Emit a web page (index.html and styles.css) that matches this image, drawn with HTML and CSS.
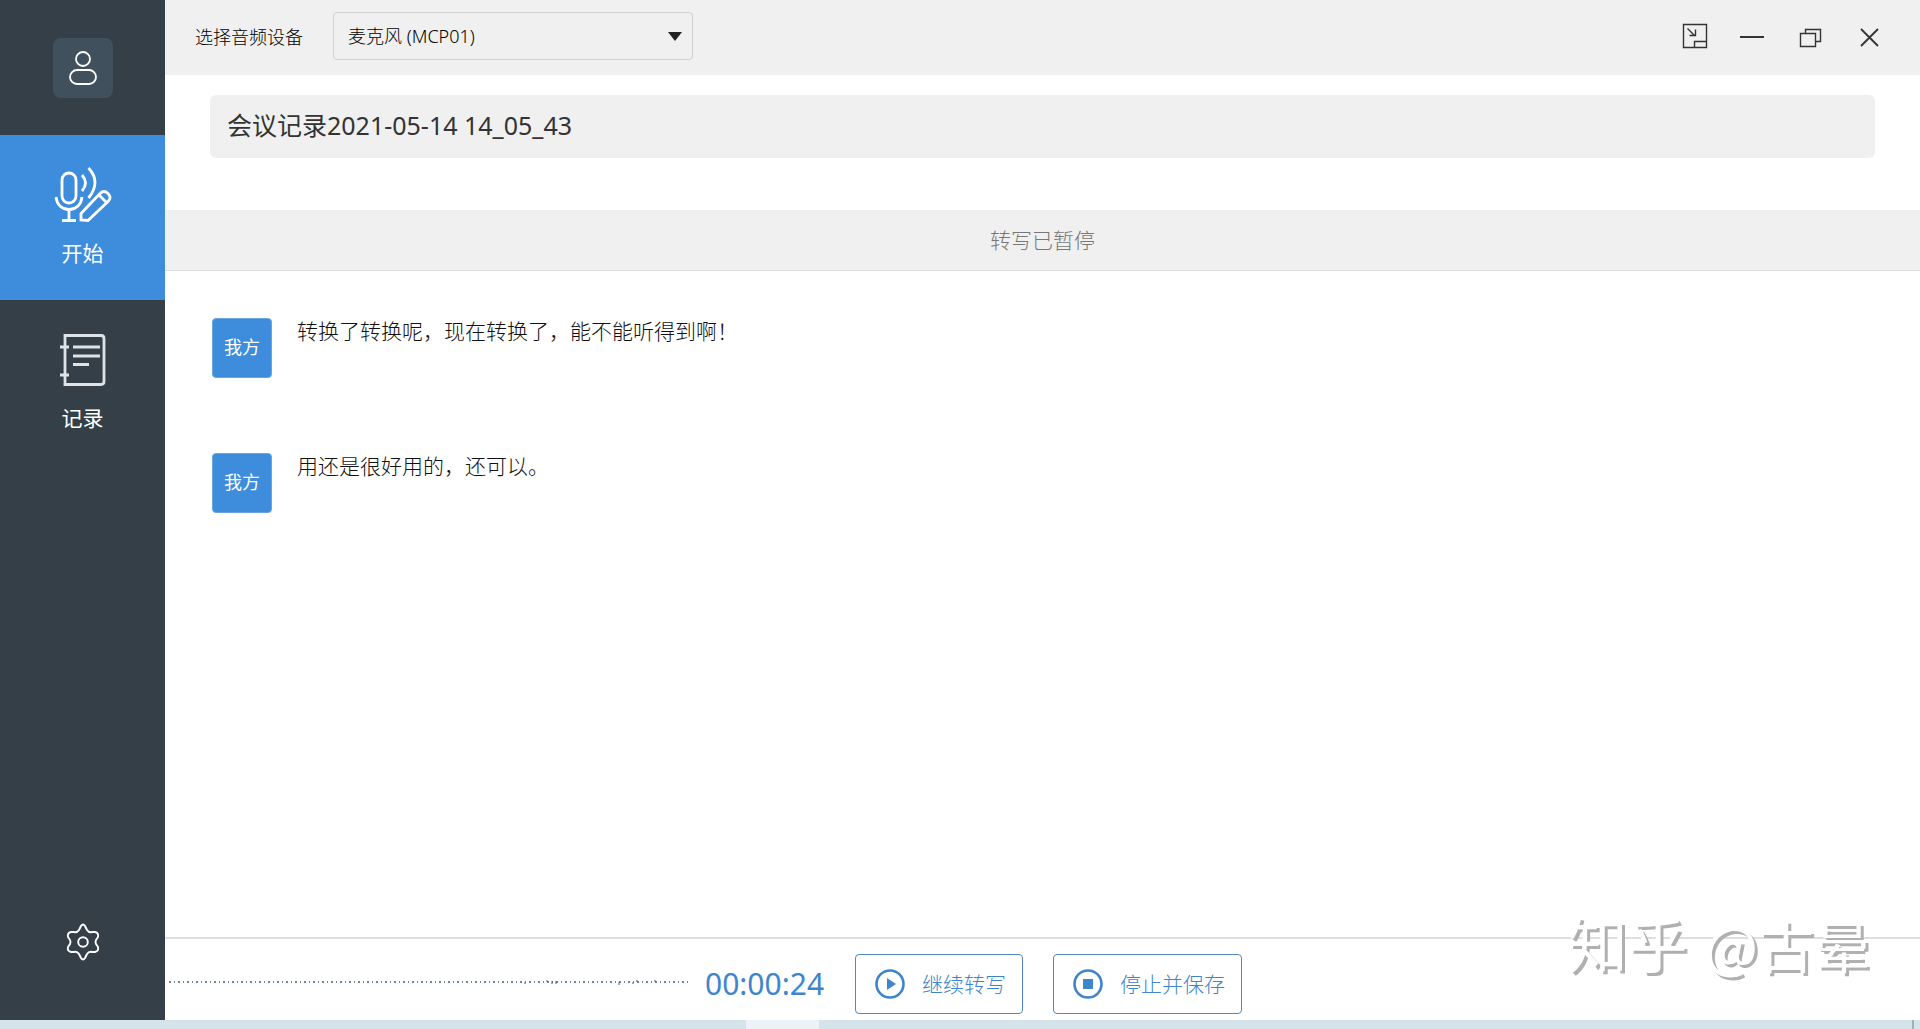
FILE: index.html
```html
<!DOCTYPE html>
<html lang="zh-CN">
<head>
<meta charset="utf-8">
<meta name="viewport" content="width=device-width, initial-scale=1">
<title>会议记录</title>
<link rel="stylesheet" href="styles.css">
</head>
<body>
<div class="window">
  <aside class="sidebar">
    <button class="user" type="button" aria-label="用户">
      <svg width="28" height="34" viewBox="0 0 28 34" fill="none" stroke="currentColor" stroke-width="1.8">
        <circle cx="14" cy="8" r="7"/>
        <rect x="1" y="19" width="26" height="14" rx="7"/>
      </svg>
    </button>
    <nav class="nav">
      <a class="nav-item active" href="#start" aria-current="page">
        <svg width="60" height="60" viewBox="0 0 60 60" fill="none" stroke="currentColor" stroke-width="2.8">
          <rect x="9" y="8" width="14" height="30" rx="7"/>
          <path d="M3 32c1 8 6 12.500 13 12.500s12-4.500 13-12.500M16 44.500v11M9 55.500h14"/>
          <path d="M29 10q7 8 0 16M35.500 3q13 14 0 30"/>
          <path d="M28 48.500l19-20q4-4 8 0t0 8l-20 19-7-.5zM45.500 29.500l7.500 7.500"/>
        </svg>
        <span>开始</span>
      </a>
      <a class="nav-item" href="#records">
        <svg width="60" height="60" viewBox="0 0 60 60" fill="none" stroke="#dde3e7" stroke-width="2.8">
          <path d="M12 5.500h36q3 0 3 3v43q0 3-3 3H12zM7 17h9M7 45h9M20 17h27M20 26h27M20 34.500h16"/>
        </svg>
        <span>记录</span>
      </a>
    </nav>
    <button class="settings" type="button" aria-label="设置">
      <svg width="36" height="38" viewBox="0 0 36 38" fill="none" stroke="currentColor" stroke-width="1.9" stroke-linejoin="round">
        <path d="M16 3q2-3 4 0l2 4q2 3 5 2h3q4 1 3 5l-2 3q-1 2 0 4l2 3q1 4-3 5h-3q-3-1-5 2l-2 4q-2 3-4 0l-2-4q-2-3-5-2H6q-4-1-3-5l2-3q1-2 0-4l-2-3q-1-4 3-5h3q3 1 5-2z"/>
        <circle cx="18" cy="19" r="4.800"/>
      </svg>
    </button>
  </aside>
  <main class="main">
    <header class="topbar">
      <label for="device">选择音频设备</label>
      <div class="select-box">
        <select id="device"><option>麦克风 (MCP01)</option></select>
        <svg class="caret" width="14" height="9" viewBox="0 0 14 9"><path d="M0 0h14L7 9z" fill="#222"/></svg>
      </div>
      <div class="controls">
        <button type="button" aria-label="小窗模式"><svg width="26" height="26" viewBox="0 0 26 26"><path d="M1.500 1.500h23v23h-23zM24.500 18.500h-12v6M5.500 5.500l7 7M13.500 6.500v6h-6"/></svg></button>
        <button type="button" aria-label="最小化"><svg width="26" height="26" viewBox="0 0 26 26"><path d="M0 14h24" stroke-width="2"/></svg></button>
        <button type="button" aria-label="还原"><svg width="26" height="26" viewBox="0 0 26 26"><path d="M2.500 10.500h15v13h-15zM7.500 10.500v-4h15v12h-5"/></svg></button>
        <button type="button" aria-label="关闭"><svg width="26" height="26" viewBox="0 0 26 26"><path d="M5 6l17 17M22 6L5 23" stroke-width="1.800"/></svg></button>
      </div>
    </header>
    <div class="title-row">
      <input class="title" type="text" aria-label="记录标题" value="会议记录2021-05-14 14_05_43">
    </div>
    <p class="status">转写已暂停</p>
    <section class="messages">
      <article class="message"><span class="avatar">我方</span><p>转换了转换呢，现在转换了，能不能听得到啊！</p></article>
      <article class="message"><span class="avatar">我方</span><p>用还是很好用的，还可以。</p></article>
    </section>
    <footer class="player">
      <svg class="wave" width="522" height="12" viewBox="0 0 522 12" stroke="#3d6277">
        <path d="M1 6h520" stroke-width="1.600" stroke-dasharray="2 3 1 3"/>
        <path d="M357 6v2M379 4v2M384 5v3M388 5v3M451 6v3M465 6v2M469 4v2M487 4v2"/>
      </svg>
      <time class="time">00:00:24</time>
      <div class="actions">
        <button class="action" type="button">
          <svg width="30" height="30" viewBox="0 0 30 30"><circle cx="15" cy="15" r="13.500" fill="none" stroke="currentColor" stroke-width="2.600"/><path d="M12 9l9 6-9 6z" fill="currentColor"/></svg>
          <span>继续转写</span>
        </button>
        <button class="action" type="button">
          <svg width="30" height="30" viewBox="0 0 30 30"><circle cx="15" cy="15" r="13.500" fill="none" stroke="currentColor" stroke-width="2.600"/><path d="M10 10h10v10H10z" fill="currentColor"/></svg>
          <span>停止并保存</span>
        </button>
      </div>
    </footer>
  </main>
</div>
<div class="taskbar"><span class="task"></span><span class="edge"></span></div>
<div class="watermark"><span class="site">知乎</span> @古晕</div>
</body>
</html>
```
FILE: styles.css
```css
* { box-sizing: border-box; }
body {
  margin: 0;
  min-height: 100vh;
  display: flex;
  flex-direction: column;
  position: relative;
  background: #fff;
  color: #333;
  font-family: "Noto Sans", "Noto Sans CJK SC", sans-serif;
  font-weight: 300;
}
button, input, select { font: inherit; color: inherit; }
button { border: 0; padding: 0; background: none; }
p { margin: 0; }
svg { display: block; flex: none; }

.window { flex: 1; display: flex; }

.sidebar {
  flex: none;
  width: 165px;
  display: flex;
  flex-direction: column;
  align-items: center;
  background: #343f48;
  color: #fff;
}
.user {
  width: 60px;
  height: 60px;
  margin: 38px 0 37px;
  display: grid;
  place-items: center;
  border-radius: 8px;
  background: #40515d;
}
.nav { width: 100%; }
.nav-item {
  height: 165px;
  padding-top: 30px;
  display: flex;
  flex-direction: column;
  align-items: center;
  gap: 12px;
  color: #fff;
  font-size: 21px;
  font-weight: 400;
  line-height: 32px;
  text-decoration: none;
}
.nav-item.active { background: #3e8cdc; }
.settings { margin-top: auto; margin-bottom: 59px; }

.main { flex: 1; min-width: 0; display: flex; flex-direction: column; }
.topbar {
  height: 75px;
  padding: 0 38px 3px 30px;
  display: flex;
  align-items: center;
  background: #f0f0f0;
  color: #000;
  font-size: 18px;
}
.select-box { position: relative; width: 360px; margin-left: 30px; }
.select-box select {
  display: block;
  width: 100%;
  height: 48px;
  padding: 0 14px;
  appearance: none;
  border: 1px solid #d0d0d0;
  border-radius: 4px;
  background: transparent;
}
.caret { position: absolute; right: 11px; top: 20px; pointer-events: none; }
.controls { margin-left: auto; display: flex; gap: 32px; }
.controls svg { fill: none; stroke: #333; stroke-width: 1.4; }

.title-row { padding: 20px 45px 52px; }
.title {
  display: block;
  width: 100%;
  height: 63px;
  padding: 0 17px 6px;
  border: 0;
  border-radius: 6px;
  background: #f0f0f0;
  font-size: 25px;
  font-weight: 400;
}
.status {
  height: 61px;
  border-bottom: 1px solid #dedede;
  background: #f0f0f0;
  color: #777;
  font-size: 21px;
  line-height: 60px;
  text-align: center;
}
.messages {
  flex: 1;
  padding: 47px 47px 24px;
  display: flex;
  flex-direction: column;
  gap: 75px;
}
.message {
  display: flex;
  gap: 25px;
  color: #111;
  font-size: 21px;
  line-height: 26px;
}
.avatar {
  flex: none;
  width: 60px;
  height: 60px;
  border: 1px solid #6ba5e0;
  border-radius: 4px;
  background: #3e8cdc;
  color: #fff;
  font-size: 18px;
  font-weight: 400;
  line-height: 56px;
  text-align: center;
}

.player {
  height: 83px;
  padding: 8px 0 0 3px;
  display: flex;
  align-items: center;
  border-top: 2px solid #dedede;
  color: #3e85cc;
}
.wave { margin-bottom: 4px; }
.time { margin-left: 15px; font-size: 30px; font-weight: 400; line-height: 40px; }
.actions { margin-left: 31px; display: flex; gap: 30px; }
.action {
  height: 60px;
  padding: 0 16px 0 19px;
  display: flex;
  align-items: center;
  gap: 17px;
  border: 1px solid #5288bd;
  border-radius: 4px;
  font-size: 21px;
  line-height: 30px;
}

.taskbar { height: 9px; display: flex; background: #d5e3ea; }
.task { width: 73px; margin-left: 746px; background: #edf2f6; }
.edge { width: 2px; margin-left: auto; margin-right: 6px; background: #9fb0b9; }

.watermark {
  position: absolute;
  right: 50px;
  bottom: 45px;
  color: #fff;
  font-family: "Noto Sans CJK SC", sans-serif;
  font-size: 56px;
  font-weight: 400;
  line-height: 80px;
  text-shadow: 3px 3px 0 #b0b0b0;
  pointer-events: none;
}
.site { margin-right: 5px; font-size: 60px; }
```
